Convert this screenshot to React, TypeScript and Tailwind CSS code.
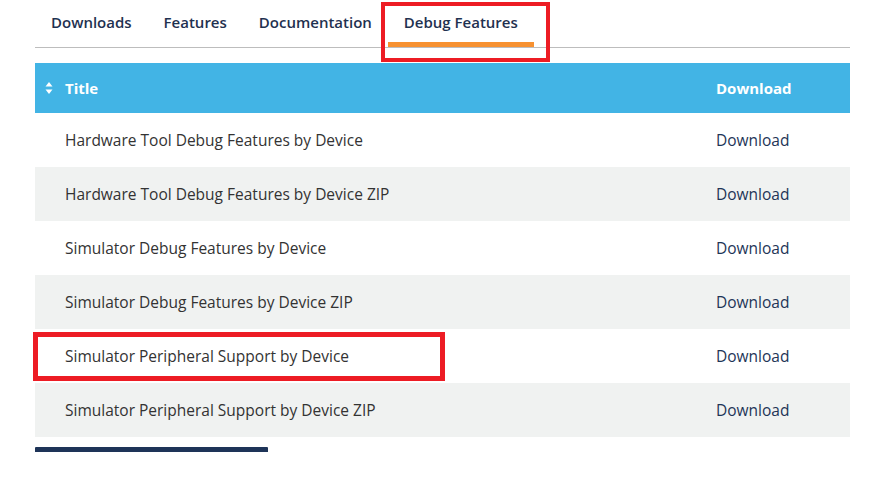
const tabs = ["Downloads", "Features", "Documentation", "Debug Features"];

const rows = [
  { title: "Hardware Tool Debug Features by Device" },
  { title: "Hardware Tool Debug Features by Device ZIP" },
  { title: "Simulator Debug Features by Device" },
  { title: "Simulator Debug Features by Device ZIP" },
  { title: "Simulator Peripheral Support by Device", marked: true },
  { title: "Simulator Peripheral Support by Device ZIP" },
];

function SortIcon() {
  return (
    <svg width="8" height="14" viewBox="0 0 8 14" className="shrink-0">
      <path d="M4 1 L7.5 5.5 H0.5 Z" fill="white" />
      <path d="M4 13 L7.5 8.5 H0.5 Z" fill="white" />
    </svg>
  );
}

export default function App() {
  return (
    <div
      className="w-[879px] h-[491px] bg-white overflow-hidden"
      style={{ fontFamily: '"Open Sans", "Liberation Sans", sans-serif' }}
    >
      <div className="ml-[35px] w-[815px]">
        {/* tabs */}
        <div className="flex h-[48px] border-b border-[#bdbdbd] pl-[16px]">
          {tabs.map((tab) => {
            const active = tab === "Debug Features";
            return (
              <div
                key={tab}
                className="relative h-full px-[16px] first:pl-0 pt-[11px] text-[15px] font-semibold text-[#1f3150]"
              >
                {tab}
                {active && (
                  <>
                    <div className="absolute left-0 right-0 top-[42px] h-[5px] bg-[#f79131]" />
                    <div className="absolute -left-[7px] -right-[16px] top-[2px] h-[60px] border-[4px] border-[#ed1c24]" />
                  </>
                )}
              </div>
            );
          })}
        </div>

        {/* table */}
        <div className="mt-[15px]">
          <div className="flex items-center h-[50px] bg-[#42b4e5] text-white text-[15px] font-bold">
            <div className="flex items-center gap-[12px] pl-[10px] flex-1">
              <SortIcon />
              <span>Title</span>
            </div>
            <div className="w-[134px]">Download</div>
          </div>
          {rows.map((row, i) => (
            <div
              key={row.title}
              className={`relative flex items-center h-[54px] pt-[2px] text-[15.5px] ${
                i % 2 === 1 ? "bg-[#f0f2f1]" : "bg-white"
              }`}
            >
              <div className="flex-1 pl-[30px] text-[#333]">{row.title}</div>
              <div className="w-[134px] text-[#1e3557] font-medium">Download</div>
              {row.marked && (
                <div className="absolute -left-[2px] top-[3px] w-[412px] h-[49px] border-[5px] border-[#ed1c24]" />
              )}
            </div>
          ))}
          <div className="mt-[10px] w-[233px] h-[5px] bg-[#1e3458] rounded-t-[1px]" />
        </div>
      </div>
    </div>
  );
}
